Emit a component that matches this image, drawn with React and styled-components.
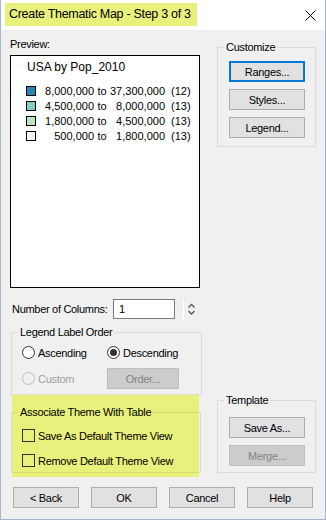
import React from 'react';
import styled, { createGlobalStyle } from 'styled-components';

const GlobalStyle = createGlobalStyle`
	* {
		box-sizing: border-box;
	}
	body {
		margin: 0;
		background: #fff;
		font-family: 'Liberation Sans', Arial, sans-serif;
	}
`;

const Window = styled.div`
	width: 326px;
	height: 520px;
	display: flex;
	flex-direction: column;
	background: #f0f0f0;
	border: 1px solid #a3b6cb;
	border-top: none;
	font-size: 11px;
	letter-spacing: -0.3px;
	color: #000;
`;

const TitleBar = styled.div`
	height: 30px;
	display: flex;
	align-items: center;
	justify-content: space-between;
	background: #fff;
	padding: 0 9px 0 4px;
`;

const TitleText = styled.div`
	background: #e9f17d;
	height: 23px;
	line-height: 23px;
	padding: 0 6px 0 4px;
	font-size: 12.5px;
	margin-top: -1px;
`;

const Main = styled.div`
	display: flex;
	gap: 15px;
	padding: 8px 9px 0 9px;
`;

const LeftCol = styled.div`
	width: 192px;
	display: flex;
	flex-direction: column;
`;

const RightCol = styled.div`
	width: 99px;
	display: flex;
	flex-direction: column;
`;

const Label = styled.div`
	line-height: 13px;
	height: 13px;
	white-space: nowrap;
`;

const PreviewBox = styled.div`
	margin-top: 4px;
	width: 190px;
	height: 233px;
	background: #fff;
	border: 1px solid #000;
	padding: 4px 0 0 15px;
	letter-spacing: 0;
`;

const MapTitle = styled.div`
	font-size: 12px;
	line-height: 14px;
	padding-left: 1px;
	margin-bottom: 9px;
`;

const LegendRow = styled.div`
	display: grid;
	grid-template-columns: 19px 49px 16px 55px auto;
	align-items: center;
	height: 15px;
	font-size: 11px;
`;

const Swatch = styled.span`
	width: 10px;
	height: 10px;
	border: 1px solid #000;
	background: ${(p) => p.color};
`;

const Num = styled.span`
	text-align: right;
	white-space: nowrap;
`;

const To = styled.span`
	text-align: center;
`;

const Count = styled.span`
	padding-left: 6px;
`;

const ColumnsRow = styled.div`
	margin-top: 11px;
	height: 20px;
	display: flex;
	align-items: center;
`;

const ColumnsLabel = styled.div`
	width: 103px;
	padding-left: 2px;
	white-space: nowrap;
`;

const TextInput = styled.div`
	width: 62px;
	height: 20px;
	background: #fff;
	border: 1px solid #7a7a7a;
	padding-left: 5px;
	line-height: 18px;
`;

const Spinner = styled.div`
	margin-left: 8px;
	height: 20px;
	display: flex;
	align-items: center;
	border-left: 1px solid #fff;
	padding-left: 3px;
`;

const Group = styled.fieldset`
	margin: ${(p) => p.$margin || '0'};
	padding: 0;
	min-width: 0;
	border: 1px solid ${(p) => (p.$onYellow ? 'rgba(120, 120, 60, 0.18)' : '#dcdcdc')};
`;

const Caption = styled.legend`
	margin-left: 6px;
	padding: 0 2px;
	line-height: 13px;
	height: 13px;
	white-space: nowrap;
`;

const GroupBody = styled.div`
	padding: ${(p) => p.$pad};
	display: flex;
	flex-direction: column;
	gap: ${(p) => p.$gap || '7px'};
`;

const Button = styled.div`
	width: ${(p) => p.$w || '76px'};
	height: 21px;
	display: flex;
	align-items: center;
	justify-content: center;
	background: ${(p) => (p.$disabled ? '#cccccc' : '#e1e1e1')};
	border: ${(p) => (p.$focus ? '2px solid #0078d7' : p.$disabled ? '1px solid #bfbfbf' : '1px solid #adadad')};
	color: ${(p) => (p.$disabled ? '#838383' : '#000')};
	white-space: nowrap;
`;

const OrderGrid = styled.div`
	display: grid;
	grid-template-columns: 85px auto;
	row-gap: 9px;
	align-items: center;
`;

const Option = styled.div`
	display: flex;
	align-items: center;
	gap: 3px;
	height: 13px;
	color: ${(p) => (p.$disabled ? '#a0a0a0' : '#000')};
`;

const Radio = styled.span`
	width: 13px;
	height: 13px;
	border-radius: 50%;
	border: 1px solid ${(p) => (p.$disabled ? '#bcbcbc' : '#333')};
	background: ${(p) => (p.$disabled ? '#f0f0f0' : '#fff')};
	display: flex;
	align-items: center;
	justify-content: center;
	&::after {
		content: '';
		width: 7px;
		height: 7px;
		border-radius: 50%;
		background: ${(p) => (p.$checked ? '#333' : 'transparent')};
	}
`;

const Highlight = styled.div`
	margin-left: 2px;
	width: 187px;
	height: 82px;
	background: #e9f17d;
	padding: 11px 0 0 0;
`;

const CheckBox = styled.span`
	width: 13px;
	height: 13px;
	border: 1px solid #333;
	background: transparent;
`;

const Footer = styled.div`
	display: flex;
	gap: 12px;
	padding: 10px 0 0 12px;
`;

const ChevronIcon = () => (
	<svg width="9" height="16" viewBox="0 0 9 16">
		<path d="M1.5 6.5 L4.5 3.5 L7.5 6.5" fill="none" stroke="#555" strokeWidth="1.3" />
		<path d="M1.5 10 L4.5 13 L7.5 10" fill="none" stroke="#555" strokeWidth="1.3" />
	</svg>
);

const CloseIcon = () => (
	<svg width="11" height="11" viewBox="0 0 11 11">
		<path d="M0.5 0.5 L10.5 10.5 M10.5 0.5 L0.5 10.5" stroke="#000" strokeWidth="1" />
	</svg>
);

const ranges = [
	{ color: '#2b83ba', from: '8,000,000', to: '37,300,000', count: 12 },
	{ color: '#7fcdc3', from: '4,500,000', to: '8,000,000', count: 13 },
	{ color: '#b9e4c2', from: '1,800,000', to: '4,500,000', count: 13 },
	{ color: '#eff9e6', from: '500,000', to: '1,800,000', count: 13 },
];

const App = () => {
	return (
		<>
			<GlobalStyle />
			<Window>
				<TitleBar>
					<TitleText>Create Thematic Map - Step 3 of 3</TitleText>
					<CloseIcon />
				</TitleBar>
				<Main>
					<LeftCol>
						<Label>Preview:</Label>
						<PreviewBox>
							<MapTitle>USA by Pop_2010</MapTitle>
							{ranges.map((r) => (
								<LegendRow key={r.from}>
									<Swatch color={r.color} />
									<Num>{r.from}</Num>
									<To>to</To>
									<Num>{r.to}</Num>
									<Count>({r.count})</Count>
								</LegendRow>
							))}
						</PreviewBox>
						<ColumnsRow>
							<ColumnsLabel>Number of Columns:</ColumnsLabel>
							<TextInput>1</TextInput>
							<Spinner>
								<ChevronIcon />
							</Spinner>
						</ColumnsRow>
						<Group $margin='7px 0 0 1px'>
							<Caption>Legend Label Order</Caption>
							<GroupBody $pad='7px 0 5px 10px' $gap='0'>
								<OrderGrid>
									<Option>
										<Radio />
										Ascending
									</Option>
									<Option>
										<Radio $checked />
										Descending
									</Option>
									<Option $disabled>
										<Radio $disabled />
										Custom
									</Option>
									<Button $w='72px' $disabled>
										Order...
									</Button>
								</OrderGrid>
							</GroupBody>
						</Group>
						<Highlight>
							<Group $margin='0 -2px 0 -1px' $onYellow>
								<Caption>Associate Theme With Table</Caption>
								<GroupBody $pad='10px 0 5px 10px' $gap='12px'>
									<Option>
										<CheckBox />
										Save As Default Theme View
									</Option>
									<Option>
										<CheckBox />
										Remove Default Theme View
									</Option>
								</GroupBody>
							</Group>
						</Highlight>
					</LeftCol>
					<RightCol>
						<Group $margin='3px 0 0 0'>
							<Caption>Customize</Caption>
							<GroupBody $pad='7px 0 8px 11px'>
								<Button $focus>Ranges...</Button>
								<Button>Styles...</Button>
								<Button>Legend...</Button>
							</GroupBody>
						</Group>
						<Group $margin='auto 0 4px 0'>
							<Caption>Template</Caption>
							<GroupBody $pad='10px 0 6px 11px'>
								<Button>Save As...</Button>
								<Button $disabled>Merge...</Button>
							</GroupBody>
						</Group>
					</RightCol>
				</Main>
				<Footer>
					<Button $w='66px'>&lt; Back</Button>
					<Button $w='66px'>OK</Button>
					<Button $w='66px'>Cancel</Button>
					<Button $w='66px'>Help</Button>
				</Footer>
			</Window>
		</>
	);
};

export default App;
